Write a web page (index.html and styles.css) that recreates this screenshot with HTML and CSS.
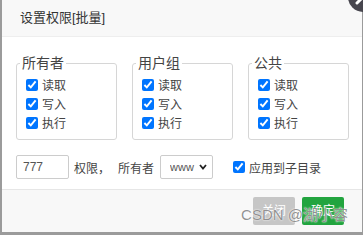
FILE: index.html
```html
<!DOCTYPE html>
<html lang="zh-CN">
<head>
  <meta charset="UTF-8">
  <title>设置权限[批量]</title>
  <link rel="stylesheet" href="styles.css">
</head>
<body>
  <div class="layer">
    <div class="layer-title">设置权限[批量]</div>
    <span class="layer-close">
      <svg width="30" height="30" viewBox="0 0 30 30">
        <circle cx="15" cy="15" r="15" fill="#47464e"/>
        <path d="M9 9 L21 21 M21 9 L9 21" stroke="#fff" stroke-width="3" stroke-linecap="round"/>
      </svg>
    </span>

    <div class="layer-content">
      <div class="groups">
        <fieldset>
          <legend>所有者</legend>
          <label><input type="checkbox" checked>读取</label>
          <label><input type="checkbox" checked>写入</label>
          <label><input type="checkbox" checked>执行</label>
        </fieldset>
        <fieldset>
          <legend>用户组</legend>
          <label><input type="checkbox" checked>读取</label>
          <label><input type="checkbox" checked>写入</label>
          <label><input type="checkbox" checked>执行</label>
        </fieldset>
        <fieldset>
          <legend>公共</legend>
          <label><input type="checkbox" checked>读取</label>
          <label><input type="checkbox" checked>写入</label>
          <label><input type="checkbox" checked>执行</label>
        </fieldset>
      </div>

      <div class="access-row">
        <input class="access-num" type="text" value="777">
        <span class="access-label">权限，</span>
        <span class="owner-label">所有者</span>
        <span class="select-wrap">
          <select class="owner-select">
            <option>www</option>
          </select>
          <svg class="chevron" width="8" height="6" viewBox="0 0 8 6">
            <path d="M1 1 L4 4.5 L7 1" fill="none" stroke="#222" stroke-width="1.8"/>
          </svg>
        </span>
        <label class="recursive"><input type="checkbox" checked>应用到子目录</label>
      </div>
    </div>

    <div class="layer-btns">
      <a class="btn btn-close">关闭</a>
      <a class="btn btn-ok">确定</a>
    </div>

    <div class="watermark">CSDN @湖小容</div>
  </div>
</body>
</html>
```

FILE: styles.css
```css
* {
  box-sizing: border-box;
}
body {
  margin: 0;
  background: #9b9b9b;
  font-family: "Liberation Sans", "Noto Sans CJK SC", sans-serif;
  color: #333;
}

.layer {
  position: relative;
  margin-left: 2px;
  width: 360px;
  height: 232px;
  background: #fff;
  display: flex;
  flex-direction: column;
}

.layer-title {
  height: 37px;
  line-height: 35px;
  padding-left: 18px;
  font-size: 13px;
  background: #f8f8f8;
  border-bottom: 1px solid #eee;
}

.layer-close {
  position: absolute;
  top: -18px;
  right: -16px;
  width: 30px;
  height: 30px;
}

.layer-content {
  flex: 1;
  padding: 18px 13px 0 14px;
  border-bottom: 1px solid #e6e6e6;
}

.groups {
  display: flex;
  gap: 15px;
}

fieldset {
  width: 101px;
  margin: 0;
  padding: 4px 3px 7px 3px;
  border: 1px solid #d6d6d6;
  border-radius: 3px;
}
legend {
  padding: 0 2px;
  font-size: 14px;
  line-height: 16px;
  color: #444;
}
fieldset label {
  display: flex;
  align-items: center;
  height: 19px;
  font-size: 12px;
  color: #444;
}
input[type="checkbox"] {
  width: 12px;
  height: 12px;
  margin: 0 4px 0 6px;
}

.access-row {
  display: flex;
  align-items: center;
  margin-top: 15px;
  font-size: 12px;
  color: #444;
}
.access-num {
  width: 53px;
  height: 24px;
  margin: 0;
  padding: 0 6px;
  border: 1px solid #ccc;
  border-radius: 2px;
  font: 12px "Liberation Sans", sans-serif;
  color: #555;
}
.access-label {
  margin-left: 5px;
}
.owner-label {
  margin-left: 8px;
}
.select-wrap {
  position: relative;
  margin-left: 6px;
  height: 24px;
}
.owner-select {
  appearance: none;
  width: 53px;
  height: 24px;
  margin: 0;
  padding: 0 0 0 9px;
  border: 1px solid #ccc;
  border-radius: 2px;
  background: #fff;
  font: 11px "Liberation Sans", sans-serif;
  color: #555;
}
.chevron {
  position: absolute;
  right: 6px;
  top: 9px;
}
.recursive {
  display: flex;
  align-items: center;
  margin-left: 14px;
}

.layer-btns {
  display: flex;
  justify-content: flex-end;
  gap: 7px;
  height: 42px;
  padding: 7px 18px 0 0;
  background: #f8f8f8;
}
.btn {
  height: 28px;
  line-height: 28px;
  padding: 0 9px;
  border-radius: 2px;
  font-size: 12px;
  color: #fff;
}
.btn-close {
  background: #c6c6c6;
}
.btn-ok {
  background: #22a43f;
}

.watermark {
  position: absolute;
  right: 14px;
  bottom: 8px;
  font-size: 15px;
  line-height: 18px;
  color: rgba(110, 110, 110, 0.75);
  text-shadow: 0 0 2px #fff, 0 0 1px #fff;
}
```
